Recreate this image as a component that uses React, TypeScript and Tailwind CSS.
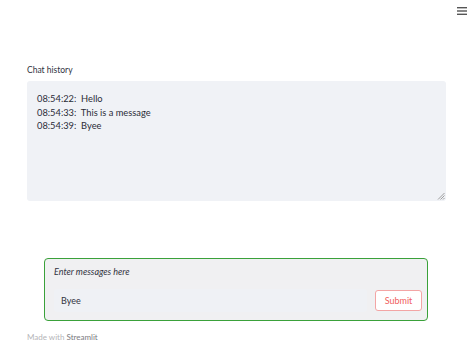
export default function App() {
  const lines = ["08:54:22:  Hello", "08:54:33:  This is a message", "08:54:39:  Byee"];
  return (
    <div className="relative h-[348px] w-[474px] overflow-hidden bg-white text-[#31333f]" style={{ fontFamily: "Lato, 'Noto Sans', sans-serif" }}>
      {/* top bar */}
      <div className="flex h-[22px] justify-end pr-[7px] pt-[7px]">
        <svg width="10" height="8" viewBox="0 0 10 8" fill="#555">
          <rect x="0" y="0" width="10" height="1.4" />
          <rect x="0" y="3.3" width="10" height="1.4" />
          <rect x="0" y="6.6" width="10" height="1.4" />
        </svg>
      </div>

      <div className="px-[27px]">
        {/* chat history */}
        <div className="mt-[42px] text-[8.5px] leading-[12px] text-[#31333f]">Chat history</div>
        <div className="relative mt-[5px] h-[120px] w-[419px] rounded-[3px] bg-[#f0f2f6] px-[10px] pt-[11px] text-[9.3px] leading-[13.5px] whitespace-pre text-[#2a2c36]">
          {lines.map((l) => (
            <div key={l}>{l}</div>
          ))}
          <svg className="absolute bottom-[1px] right-[1px]" width="8" height="8" viewBox="0 0 8 8" stroke="#888" strokeWidth="0.8">
            <line x1="7.5" y1="1" x2="1" y2="7.5" />
            <line x1="7.5" y1="3.5" x2="3.5" y2="7.5" />
            <line x1="7.5" y1="6" x2="6" y2="7.5" />
          </svg>
        </div>

        {/* form */}
        <div className="mx-[17px] mt-[57px] h-[63px] w-[384px] rounded-[4px] border-[1.5px] border-[#3aa13a] bg-[#f0f0f2] pl-[9px] pr-[5px] pt-[6px]">
          <div className="text-[9px] italic leading-[14px] text-[#31333f]">Enter messages here</div>
          <div className="mt-[10px] flex items-center gap-[8px]">
            <div className="flex h-[23px] flex-1 items-center rounded-[3px] bg-[#eff1f5] px-[7px] text-[9px]">Byee</div>
            <div className="flex h-[21px] w-[47px] items-center justify-center rounded-[3px] border border-[#f3a5a5] bg-white text-[9px] text-[#f06060]">Submit</div>
          </div>
        </div>

        {/* footer */}
        <div className="mt-[10px] text-[8px] leading-[12px] text-[#b5b5b8]">
          Made with <span className="text-[#7a7a80]">Streamlit</span>
        </div>
      </div>
    </div>
  );
}
